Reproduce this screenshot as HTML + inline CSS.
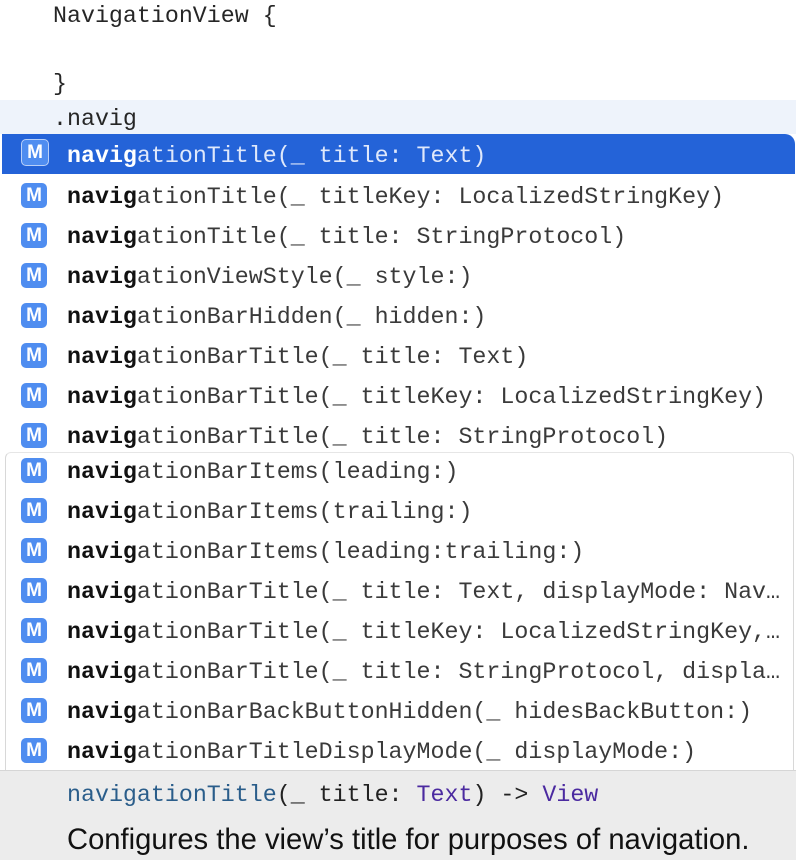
<!DOCTYPE html>
<html><head><meta charset="utf-8"><style>
body{margin:0;width:796px;height:859px;position:relative;overflow:hidden;background:#fff;font-family:"Liberation Mono",monospace;}
.code{position:absolute;left:53px;font-size:23.3px;color:#262626;}
.hl{position:absolute;left:0;top:100px;width:796px;height:34px;background:#eef3fb;}
.row{position:absolute;left:0;height:40px;width:796px;font-size:23.3px;color:#3a3a3a;white-space:nowrap;}
.row .ic{position:absolute;left:21px;top:8px;width:26px;height:25px;border-radius:5px;background:#4f8df0;color:#fff;font:bold 19px "Liberation Sans",sans-serif;text-align:center;line-height:25px;}
.row .t{position:absolute;left:67px;top:2px;line-height:40px;}
.row b{color:#111;}
.sel{background:#2463d8;color:#dfe8fb;border-radius:0 10px 0 0;left:2px;width:793px;}
.sel b{color:#fff}
.sel .ic{left:19px;border:1.5px solid #b9d0f8;top:5px;}
.lower{position:absolute;left:5px;top:452px;width:787px;height:407px;background:#fff;border-left:1px solid #d8d8d8;border-right:1px solid #d8d8d8;border-top:1px solid #e6e6e6;border-radius:6px 6px 0 0;}
.desc{position:absolute;left:0;top:770px;width:796px;height:89px;background:#ececec;border-top:1px solid #d6d6d6;}
</style></head><body>
<div class="code" style="top:3px">NavigationView {</div>
<div class="code" style="top:71px">}</div>
<div class="hl"></div>
<div class="code" style="top:106px">.navig</div>

<div class="row sel" style="top:134px"><div class="ic">M</div><div class="t" style="left:65px"><b>navig</b>ationTitle(_ title: Text)</div></div>
<div class="row" style="top:175px"><div class="ic">M</div><div class="t"><b>navig</b>ationTitle(_ titleKey: LocalizedStringKey)</div></div>
<div class="row" style="top:215px"><div class="ic">M</div><div class="t"><b>navig</b>ationTitle(_ title: StringProtocol)</div></div>
<div class="row" style="top:255px"><div class="ic">M</div><div class="t"><b>navig</b>ationViewStyle(_ style:)</div></div>
<div class="row" style="top:295px"><div class="ic">M</div><div class="t"><b>navig</b>ationBarHidden(_ hidden:)</div></div>
<div class="row" style="top:335px"><div class="ic">M</div><div class="t"><b>navig</b>ationBarTitle(_ title: Text)</div></div>
<div class="row" style="top:375px"><div class="ic">M</div><div class="t"><b>navig</b>ationBarTitle(_ titleKey: LocalizedStringKey)</div></div>
<div class="row" style="top:415px"><div class="ic">M</div><div class="t"><b>navig</b>ationBarTitle(_ title: StringProtocol)</div></div>

<div class="lower"></div>
<div class="row" style="top:450px"><div class="ic">M</div><div class="t"><b>navig</b>ationBarItems(leading:)</div></div>
<div class="row" style="top:490px"><div class="ic">M</div><div class="t"><b>navig</b>ationBarItems(trailing:)</div></div>
<div class="row" style="top:530px"><div class="ic">M</div><div class="t"><b>navig</b>ationBarItems(leading:trailing:)</div></div>
<div class="row" style="top:570px"><div class="ic">M</div><div class="t"><b>navig</b>ationBarTitle(_ title: Text, displayMode: Nav…</div></div>
<div class="row" style="top:610px"><div class="ic">M</div><div class="t"><b>navig</b>ationBarTitle(_ titleKey: LocalizedStringKey,…</div></div>
<div class="row" style="top:650px"><div class="ic">M</div><div class="t"><b>navig</b>ationBarTitle(_ title: StringProtocol, displa…</div></div>
<div class="row" style="top:690px"><div class="ic">M</div><div class="t"><b>navig</b>ationBarBackButtonHidden(_ hidesBackButton:)</div></div>
<div class="row" style="top:730px"><div class="ic">M</div><div class="t"><b>navig</b>ationBarTitleDisplayMode(_ displayMode:)</div></div>

<div class="desc">
<div style="position:absolute;left:67px;top:11px;font-size:23.3px;color:#222;white-space:nowrap"><span style="color:#2a5d8a">navigationTitle</span>(_ title: <span style="color:#4b2aa0">Text</span>) -&gt; <span style="color:#4b2aa0">View</span></div>
<div style="position:absolute;left:67px;top:53px;font:29.2px 'Liberation Sans',sans-serif;color:#111;white-space:nowrap">Configures the view’s title for purposes of navigation.</div>
</div>
</body></html>
